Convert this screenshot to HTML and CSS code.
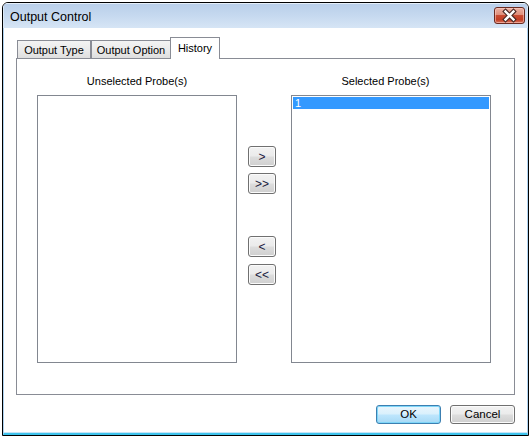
FILE: index.html
```html
<!DOCTYPE html>
<html>
<head>
<meta charset="utf-8">
<link rel="stylesheet" href="styles.css">
</head>
<body>
<div class="window">
  <div class="titlebar">
    <span class="title">Output Control</span>
    <div class="close">
      <svg width="29" height="15" viewBox="0 0 29 15">
        <path d="M10.5 3.5 L18.5 11.5 M18.5 3.5 L10.5 11.5" stroke="#4a2a26" stroke-width="4.6" stroke-linecap="square" fill="none"/>
        <path d="M10.5 3.5 L18.5 11.5 M18.5 3.5 L10.5 11.5" stroke="#ffffff" stroke-width="2.4" stroke-linecap="square" fill="none"/>
      </svg>
    </div>
  </div>
  <div class="client">
    <div class="tabs">
      <div class="tab tab-type">Output Type</div>
      <div class="tab tab-option">Output Option</div>
      <div class="tab tab-active">History</div>
    </div>
    <div class="panel">
      <div class="col">
        <div class="label">Unselected Probe(s)</div>
        <div class="listbox"></div>
      </div>
      <div class="movers">
        <button class="btn mv">&gt;</button>
        <button class="btn mv mv-gap-s">&gt;&gt;</button>
        <button class="btn mv mv-gap-l">&lt;</button>
        <button class="btn mv mv-gap-s2">&lt;&lt;</button>
      </div>
      <div class="col">
        <div class="label label-right">Selected Probe(s)</div>
        <div class="listbox"><div class="item">1</div></div>
      </div>
    </div>
    <div class="actions">
      <button class="btn action default">OK</button>
      <button class="btn action">Cancel</button>
    </div>
  </div>
</div>
</body>
</html>
```

FILE: styles.css
```css
* { box-sizing: border-box; }

body {
  margin: 0;
  padding: 2px;
  background: #ffffff;
  font-family: "Liberation Sans", Arial, sans-serif;
  font-size: 11px;
  color: #000;
}

.window {
  width: 527px;
  height: 434px;
  border: 1px solid #000;
  border-radius: 6px 6px 0 0;
  display: flex;
  flex-direction: column;
  overflow: hidden;
  background: #ffffff;
}

.titlebar {
  flex: none;
  height: 25px;
  display: flex;
  align-items: center;
  padding-left: 6px;
  background: linear-gradient(#b9cfea 0%, #c6d9ef 50%, #d6e5f5 100%);
  border-left: 1px solid #d9e8f6;
  border-right: 1px solid #d9e8f6;
  border-top: 1px solid #e4eef9;
}

.title {
  font-size: 12.5px;
  color: #000;
  padding-top: 1px;
}

.close {
  margin-left: auto;
  margin-right: 2px;
  align-self: flex-start;
  margin-top: 3px;
  width: 31px;
  height: 17px;
  border: 1px solid #6a2a20;
  border-radius: 3px;
  background: linear-gradient(#eab0a2 0%, #df8f7c 45%, #c84b32 50%, #c23f25 78%, #d8765f 100%);
  box-shadow: inset 0 0 0 1px rgba(255, 210, 200, 0.55);
  display: flex;
  align-items: center;
  justify-content: center;
}

.close svg { display: block; }

.client {
  flex: 1;
  border-left: 1px solid #aed2f0;
  border-right: 1px solid #aed2f0;
  border-bottom: 2px solid #3ec3ec;
  box-shadow: inset 0 -1px 0 #c4e4f8;
  padding: 9px 12px 0 12px;
  background: #ffffff;
}

.tabs {
  display: flex;
  align-items: flex-end;
  height: 21px;
  padding-left: 1px;
  position: relative;
  z-index: 1;
}

.tab {
  height: 18px;
  border: 1px solid #898c95;
  border-bottom: none;
  background: linear-gradient(#f3f3f3 0%, #ebebeb 50%, #dedede 100%);
  text-align: center;
  line-height: 17px;
  padding-top: 1px;
  white-space: nowrap;
}

.tab-type { width: 74px; }
.tab-option { width: 80px; }

.tab-active {
  width: 50px;
  height: 22px;
  margin-left: -1px;
  margin-bottom: -1px;
  background: #ffffff;
  line-height: 18px;
  padding-top: 1px;
}

.panel {
  height: 337px;
  border: 1px solid #898c95;
  background: #ffffff;
  display: flex;
  padding: 15px 23px 0 20px;
}

.col {
  width: 200px;
  display: flex;
  flex-direction: column;
}

.label {
  height: 14px;
  line-height: 14px;
  text-align: center;
  margin-bottom: 7px;
  white-space: nowrap;
}

.label-right { padding-right: 11px; }

.listbox {
  width: 200px;
  height: 268px;
  border: 1px solid #828790;
  background: #ffffff;
  padding: 1px;
}

.item {
  height: 12px;
  line-height: 12px;
  padding-left: 2px;
  background: #3399ff;
  color: #ffffff;
}

.movers {
  width: 28px;
  margin-left: 11px;
  margin-right: 15px;
  padding-top: 72px;
  display: flex;
  flex-direction: column;
}

.btn {
  font-family: "Liberation Sans", Arial, sans-serif;
  font-size: 11px;
  color: #000;
  padding: 0;
  margin: 0;
  border: 1px solid #707070;
  border-radius: 3px;
  background: linear-gradient(#f2f2f2 0%, #ebebeb 48%, #dddddd 52%, #cfcfcf 100%);
  box-shadow: inset 0 0 0 1px #fbfbfb;
  line-height: 1;
}

.mv {
  width: 28px;
  height: 21px;
  font-size: 12px;
  color: #1a1a40;
}

.mv-gap-s { margin-top: 6px; }
.mv-gap-l { margin-top: 42px; }
.mv-gap-s2 { margin-top: 7px; }

.actions {
  display: flex;
  justify-content: flex-end;
  gap: 9px;
  margin-top: 10px;
}

.action {
  width: 65px;
  height: 19px;
  font-size: 11.5px;
}

.default {
  border-color: #3c7fb1;
  background: linear-gradient(#eaf6fd 0%, #d9f0fc 48%, #bee6fd 52%, #a7d9f5 100%);
  box-shadow: inset 0 0 0 1px #7fd6f8;
}
```
